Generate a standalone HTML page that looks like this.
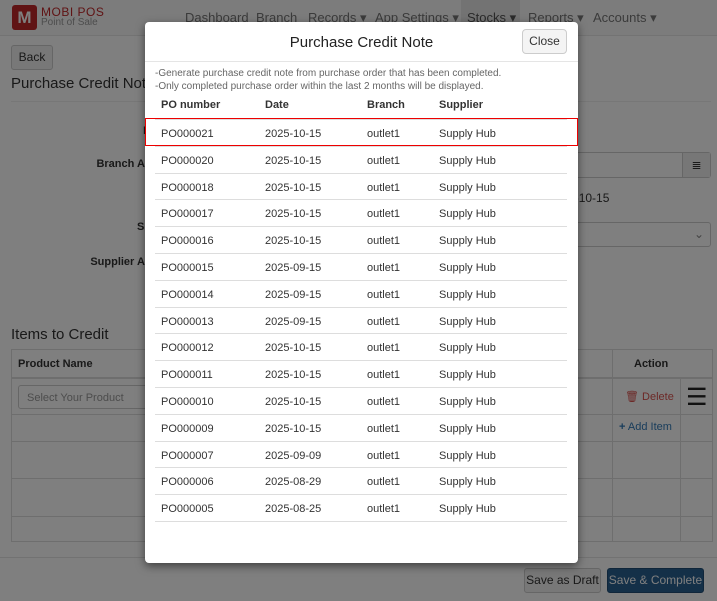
<!DOCTYPE html>
<html><head><meta charset="utf-8"><style>
*{box-sizing:border-box;margin:0;padding:0}
body{width:717px;height:601px;overflow:hidden;position:relative;font-family:"Liberation Sans",sans-serif;background:#fff;color:#333;font-size:12px}
.a{position:absolute}
.nav{left:0;top:0;width:717px;height:36px;background:#f8f8f8;border-bottom:1px solid #e7e7e7}
.nav span{position:absolute;top:10px;font-size:13px;color:#777}
.btn{position:absolute;border:1px solid #ccc;border-radius:3px;background:#f0f0f0;font-size:12px;color:#333;text-align:center}
.lbl{position:absolute;font-weight:bold;font-size:11px;right:536px}
.in{position:absolute;border:1px solid #ccc;border-radius:3px;background:#fff}
.ov{left:0;top:0;width:717px;height:601px;background:rgba(0,0,0,.5)}
.modal{left:145px;top:22px;width:433px;height:541px;background:#fff;border-radius:4px;box-shadow:0 3px 9px rgba(0,0,0,.5)}
.row{position:absolute;left:10px;width:412px;height:27px;border-top:1px solid #ddd;font-size:11px;color:#333}
.row span{position:absolute;top:8px}
</style></head><body>
<div class="a nav">
 <div class="a" style="left:12px;top:5px;width:25px;height:25px;background:#c0282a;border-radius:3px;color:#fff;font-weight:bold;font-size:17px;text-align:center;line-height:25px">M</div>
 <div class="a" style="left:41px;top:5px;color:#c0282a;font-size:12px;letter-spacing:.5px">MOBI POS</div>
 <div class="a" style="left:41px;top:17px;color:#999;font-size:10px">Point of Sale</div>
 <span style="left:185px">Dashboard</span><span style="left:256px">Branch</span><span style="left:308px">Records ▾</span><span style="left:375px">App Settings ▾</span>
 <div class="a" style="left:461px;top:0;width:59px;height:36px;background:#e7e7e7"></div>
 <span style="left:467px;color:#555">Stocks ▾</span><span style="left:528px">Reports ▾</span><span style="left:593px">Accounts ▾</span>
</div>
<div class="btn" style="left:11px;top:45px;width:42px;height:25px;line-height:23px">Back</div>
<div class="a" style="left:11px;top:75px;font-size:15px">Purchase Credit Note</div>
<div class="a" style="left:11px;top:101px;width:700px;border-top:1px solid #eee"></div>
<div class="lbl" style="top:125px">Branch</div>
<div class="lbl" style="top:158px">Branch Address</div>
<div class="lbl" style="top:221px">Supplier</div>
<div class="lbl" style="top:256px">Supplier Address</div>
<div class="in" style="left:400px;top:152px;width:311px;height:26px"><div class="a" style="right:0;top:0;width:28px;height:24px;background:#eee;border-left:1px solid #ccc;text-align:center;line-height:24px">≣</div></div>
<div class="a" style="left:548px;top:191px;font-size:12px">2025-10-15</div>
<div class="in" style="left:400px;top:222px;width:311px;height:25px"><span class="a" style="left:137px;top:5px">Please</span><span class="a" style="right:6px;top:4px;color:#888">⌄</span></div>
<div class="a" style="left:11px;top:326px;font-size:15px">Items to Credit</div>
<div class="a" style="left:11px;top:349px;width:702px;height:193px;border:1px solid #ddd">
 <div class="a" style="left:0;top:27px;width:700px;border-top:2px solid #ddd"></div>
 <div class="a" style="left:0;top:64px;width:700px;border-top:1px solid #ddd"></div>
 <div class="a" style="left:0;top:91px;width:700px;border-top:1px solid #ddd"></div>
 <div class="a" style="left:0;top:128px;width:700px;border-top:1px solid #ddd"></div>
 <div class="a" style="left:0;top:166px;width:700px;border-top:1px solid #ddd"></div>
 <div class="a" style="left:600px;top:0;height:191px;border-left:1px solid #ddd"></div>
 <div class="a" style="left:668px;top:28px;height:163px;border-left:1px solid #ddd"></div>
 <div class="a" style="left:6px;top:8px;font-weight:bold;font-size:11px">Product Name</div>
 <div class="a" style="left:622px;top:8px;font-weight:bold;font-size:11px">Action</div>
 <div class="in" style="left:6px;top:35px;width:200px;height:24px;color:#999;font-size:11px;padding:6px 8px">Select Your Product</div>
 <div class="a" style="left:613px;top:40px;color:#d9534f;font-size:11px">🗑 Delete</div>
 <div class="a" style="left:674px;top:33px;font-size:24px;color:#222">☰</div>
 <div class="a" style="left:607px;top:71px;color:#337ab7;font-size:11px"><b>+</b> Add Item</div>
</div>
<div class="a" style="left:0;top:557px;width:717px;border-top:1px solid #e5e5e5"></div>
<div class="btn" style="left:524px;top:568px;width:77px;height:25px;line-height:23px">Save as Draft</div>
<div class="btn" style="left:607px;top:568px;width:97px;height:25px;line-height:23px;background:#286090;border-color:#204d74;color:#fff">Save &amp; Complete</div>

<div class="a ov"></div>
<div class="a modal">
 <div class="a" style="left:0;top:12px;width:433px;text-align:center;font-size:15px;color:#222">Purchase Credit Note</div>
 <div class="btn" style="left:377px;top:7px;width:45px;height:25px;line-height:23px;background:#f4f4f4;border-radius:4px">Close</div>
 <div class="a" style="left:0;top:39px;width:433px;border-top:1px solid #e5e5e5"></div>
 <div class="a" style="left:10px;top:45px;font-size:10px;color:#666;line-height:13px">-Generate purchase credit note from purchase order that has been completed.<br>-Only completed purchase order within the last 2 months will be displayed.</div>
 <div class="a" style="left:16px;top:77px;font-weight:bold;font-size:11px">PO number</div>
 <div class="a" style="left:120px;top:77px;font-weight:bold;font-size:11px">Date</div>
 <div class="a" style="left:222px;top:77px;font-weight:bold;font-size:11px">Branch</div>
 <div class="a" style="left:294px;top:77px;font-weight:bold;font-size:11px">Supplier</div>
 <div id="rows"></div>
 <div class="a" style="left:0;top:96px;width:433px;height:28px;border:1.5px solid #e00"></div>
</div>
<script>
var d=[["PO000021","2025-10-15"],["PO000020","2025-10-15"],["PO000018","2025-10-15"],["PO000017","2025-10-15"],["PO000016","2025-10-15"],["PO000015","2025-09-15"],["PO000014","2025-09-15"],["PO000013","2025-09-15"],["PO000012","2025-10-15"],["PO000011","2025-10-15"],["PO000010","2025-10-15"],["PO000009","2025-10-15"],["PO000007","2025-09-09"],["PO000006","2025-08-29"],["PO000005","2025-08-25"]];
var h="";d.forEach(function(r,i){h+='<div class="row" style="top:'+(97+i*26.8)+'px"><span style="left:6px">'+r[0]+'</span><span style="left:110px">'+r[1]+'</span><span style="left:212px">outlet1</span><span style="left:284px">Supply Hub</span></div>';});
h+='<div class="row" style="top:'+(97+15*26.8)+'px;height:2px"></div>';
document.getElementById("rows").innerHTML=h;
</script>
</body></html>
